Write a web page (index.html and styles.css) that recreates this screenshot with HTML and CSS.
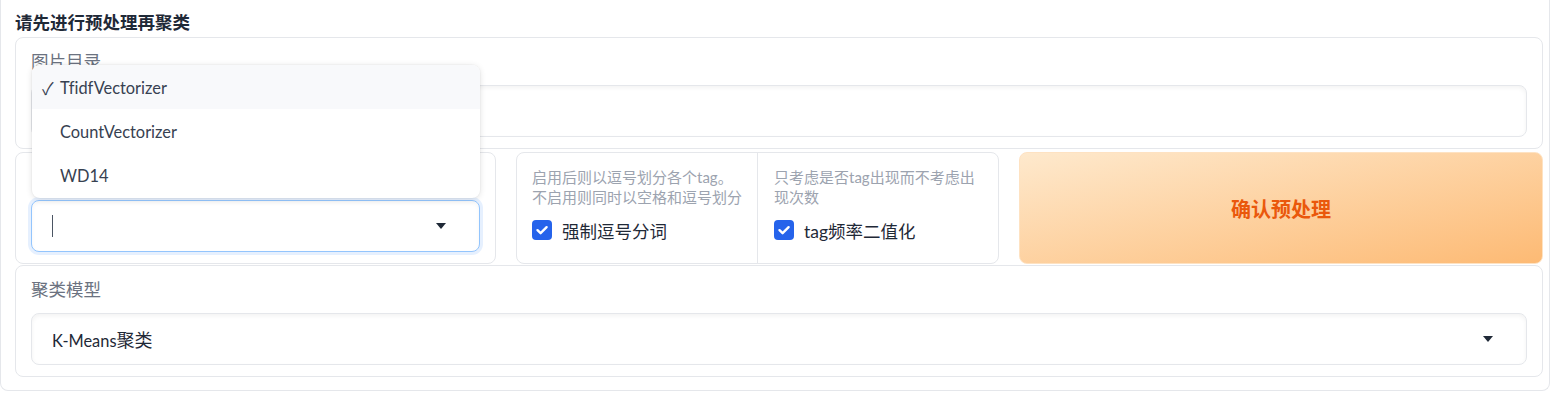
FILE: index.html
```html
<!DOCTYPE html>
<html lang="zh-CN">
<head>
<meta charset="utf-8">
<title>预处理</title>
<link rel="stylesheet" href="styles.css">
</head>
<body>
<div class="panel">
  <div class="title">请先进行预处理再聚类</div>

  <div class="block">
    <div class="label">图片目录</div>
    <div class="input"></div>
  </div>

  <div class="row">
    <div class="block block-dd">
      <div class="label">向量化方法</div>
      <div class="dd-wrap">
        <div class="input input-focus">
          <span class="caret"></span>
          <span class="arrow"></span>
        </div>
        <ul class="menu">
          <li class="menu-item selected"><span class="tick">✓</span>TfidfVectorizer</li>
          <li class="menu-item"><span class="tick"></span>CountVectorizer</li>
          <li class="menu-item"><span class="tick"></span>WD14</li>
        </ul>
      </div>
    </div>

    <div class="checkgroup">
      <div class="check-item">
        <div class="info">启用后则以逗号划分各个tag。<br>不启用则同时以空格和逗号划分</div>
        <label class="check-row">
          <span class="box"><svg viewBox="0 0 20 20" width="20" height="20"><path d="M5.5 10.2 L8.6 13.2 L14.6 7.2" fill="none" stroke="#fff" stroke-width="2.4" stroke-linecap="round" stroke-linejoin="round"/></svg></span>
          <span class="check-label">强制逗号分词</span>
        </label>
      </div>
      <div class="check-item second">
        <div class="info">只考虑是否tag出现而不考虑出<br>现次数</div>
        <label class="check-row">
          <span class="box"><svg viewBox="0 0 20 20" width="20" height="20"><path d="M5.5 10.2 L8.6 13.2 L14.6 7.2" fill="none" stroke="#fff" stroke-width="2.4" stroke-linecap="round" stroke-linejoin="round"/></svg></span>
          <span class="check-label">tag频率二值化</span>
        </label>
      </div>
    </div>

    <button class="primary">确认预处理</button>
  </div>

  <div class="block block-last">
    <div class="label">聚类模型</div>
    <div class="input">
      <span class="value"><span class="latin">K-Means</span>聚类</span>
      <span class="arrow"></span>
    </div>
  </div>
</div>
</body>
</html>
```

FILE: styles.css
```css
* { box-sizing: border-box; }

html, body {
  margin: 0;
  padding: 0;
  background: #ffffff;
  font-family: "Lato", "Noto Sans CJK SC", sans-serif;
  font-variant-ligatures: none;
  color: #1f2937;
}

.panel {
  width: 1550px;
  height: 391px;
  border: 1px solid #e5e7eb;
  border-top: none;
  border-radius: 0 0 8px 8px;
  padding: 11px 6px 0 14px;
}

.title {
  font-size: 17.5px;
  line-height: 24px;
  font-weight: 700;
  color: #1f2937;
}

.block {
  margin-top: 2px;
  height: 112px;
  border: 1px solid #e5e7eb;
  border-radius: 8px;
  padding: 11px 15px;
  background: #fff;
}

.block-last { margin-top: 1px; }

.label {
  font-size: 17.5px;
  line-height: 26px;
  color: #6b7280;
}

.input {
  margin-top: 10px;
  height: 52px;
  border: 1px solid #e5e7eb;
  border-radius: 8px;
  box-shadow: inset 0 2px 4px rgba(0, 0, 0, 0.05);
  background: #fff;
  display: flex;
  align-items: center;
  padding: 0 33px 0 20px;
  font-size: 18px;
  color: #1f2937;
}

.latin {
  font-size: 16.4px;
}

.input-focus {
  border-color: #93c5fd;
  box-shadow: 0 0 0 3px rgba(219, 234, 254, 0.7), inset 0 2px 4px rgba(0, 0, 0, 0.04);
}

.caret {
  width: 1px;
  height: 22px;
  background: #4b5563;
}

.arrow {
  margin-left: auto;
  width: 0;
  height: 0;
  border-left: 5px solid transparent;
  border-right: 5px solid transparent;
  border-top: 6px solid #1f2937;
}

.row {
  margin-top: 3px;
  height: 112px;
  display: flex;
  gap: 20px;
}

.row .block {
  margin-top: 0;
}

.block-dd {
  width: 481px;
  flex: none;
}

.dd-wrap {
  position: relative;
}

.menu {
  position: absolute;
  left: 1px;
  right: 0;
  bottom: calc(100% + 2px);
  margin: 0;
  padding: 0;
  list-style: none;
  background: #fff;
  border-radius: 8px;
  box-shadow: 0 1px 6px rgba(0, 0, 0, 0.12), 0 0 0 1px rgba(0, 0, 0, 0.02);
  overflow: hidden;
  z-index: 5;
}

.menu-item {
  height: 44.4px;
  display: flex;
  align-items: center;
  padding-left: 10px;
  font-size: 16.4px;
  color: #374151;
}

.menu-item.selected {
  background: #f8f9fb;
}

.tick {
  width: 18px;
  flex: none;
  font-family: "DejaVu Sans", sans-serif;
  font-size: 17px;
  font-weight: 300;
}

.checkgroup {
  width: 483px;
  flex: none;
  border: 1px solid #e5e7eb;
  border-radius: 8px;
  display: flex;
}

.check-item {
  width: 240px;
  flex: none;
  padding: 14px 10px 0 15px;
}

.check-item.second {
  width: 241px;
  border-left: 1px solid #e5e7eb;
  padding-left: 16px;
}

.info {
  font-size: 15px;
  line-height: 20px;
  color: #9ca3af;
  white-space: nowrap;
}

.check-row {
  margin-top: 10px;
  height: 26px;
  display: flex;
  align-items: center;
  gap: 10px;
}

.box {
  width: 20px;
  height: 20px;
  border-radius: 4px;
  background: #2563eb;
  display: block;
  flex: none;
}

.box svg { display: block; }

.check-label {
  font-size: 17.5px;
  color: #1f2937;
}

.primary {
  width: 524px;
  flex: none;
  height: 112px;
  border: 1px solid #fee2c2;
  border-radius: 8px;
  background: linear-gradient(to bottom right, #fee9cd, #fdba74);
  font-family: "Lato", "Noto Sans CJK SC", sans-serif;
  font-size: 20px;
  font-weight: 700;
  color: #ea580c;
  padding: 0;
}
```
